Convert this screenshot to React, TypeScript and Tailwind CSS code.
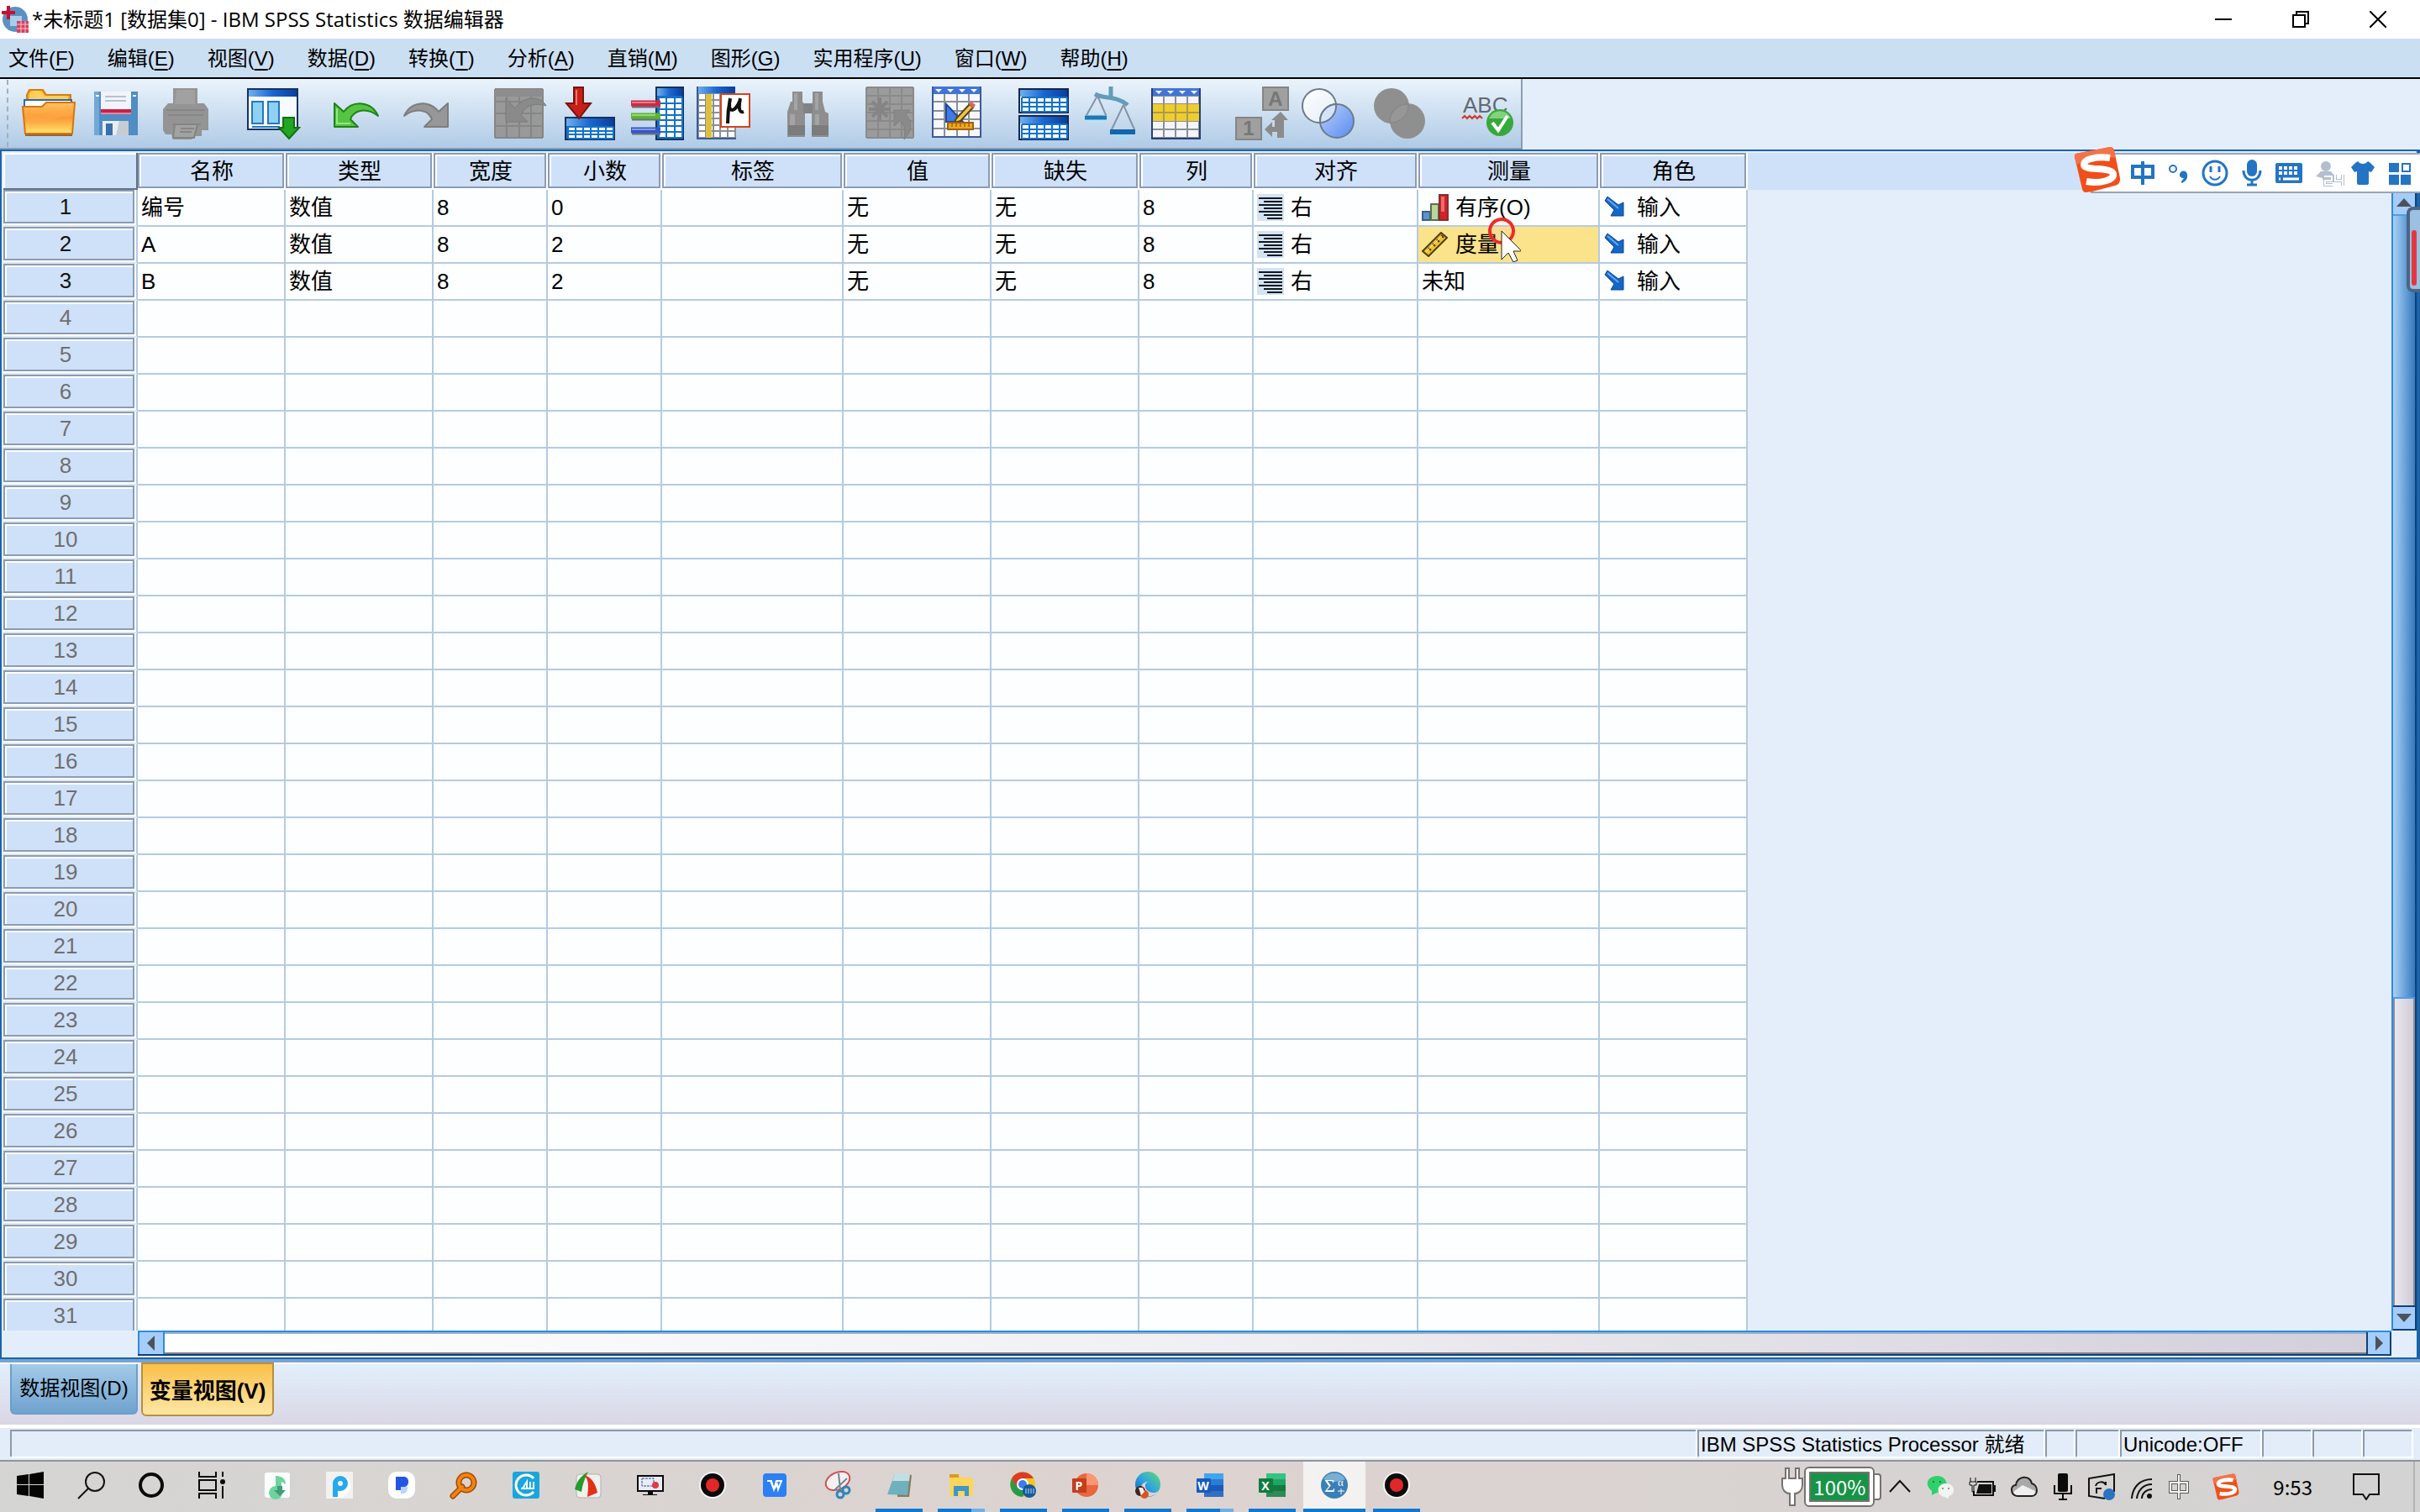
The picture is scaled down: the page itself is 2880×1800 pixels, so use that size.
import type { ReactNode } from "react";
import clsx from "clsx";

/* ---------- data ---------- */

const menus = [
  ["文件", "F"],
  ["编辑", "E"],
  ["视图", "V"],
  ["数据", "D"],
  ["转换", "T"],
  ["分析", "A"],
  ["直销", "M"],
  ["图形", "G"],
  ["实用程序", "U"],
  ["窗口", "W"],
  ["帮助", "H"],
];

const columns = [
  { name: "名称", width: "w-[176px]" },
  { name: "类型", width: "w-[176px]" },
  { name: "宽度", width: "w-[136px]" },
  { name: "小数", width: "w-[136px]" },
  { name: "标签", width: "w-[216px]" },
  { name: "值", width: "w-[176px]" },
  { name: "缺失", width: "w-[176px]" },
  { name: "列", width: "w-[136px]" },
  { name: "对齐", width: "w-[196px]" },
  { name: "测量", width: "w-[216px]" },
  { name: "角色", width: "w-[176px]" },
];

type Variable = {
  name: string;
  decimals: string;
  measure: ReactNode;
  selected?: boolean;
};

const variables: Variable[] = [
  {
    name: "编号",
    decimals: "0",
    measure: (
      <IconLabel icon={<OrdinalIcon />}>有序(O)</IconLabel>
    ),
  },
  {
    name: "A",
    decimals: "2",
    measure: <IconLabel icon={<ScaleIcon />}>度量</IconLabel>,
    selected: true,
  },
  { name: "B", decimals: "2", measure: "未知" },
];

const ROW_COUNT = 31;

/* ---------- cell icons ---------- */

function IconLabel({ icon, children }: { icon: ReactNode; children: ReactNode }) {
  return (
    <span className="flex items-center gap-2">
      {icon}
      <span>{children}</span>
    </span>
  );
}

function OrdinalIcon() {
  return (
    <svg className="h-8 w-8" viewBox="0 0 32 32" aria-hidden="true">
      <rect x="1" y="21" width="9" height="10" fill="#5b93cf" stroke="#3f5f86" strokeWidth="2" />
      <rect x="11" y="12" width="9" height="19" fill="#b9d79b" stroke="#5c7050" strokeWidth="2" />
      <rect x="21" y="1" width="10" height="30" fill="#d81f26" stroke="#7c3236" strokeWidth="2" />
      <rect x="23" y="3" width="4" height="18" fill="#f06a6a" />
    </svg>
  );
}

function ScaleIcon() {
  return (
    <svg className="h-8 w-8" viewBox="0 0 32 32" aria-hidden="true">
      <path d="M1 24 23 2l7 6L8 30z" fill="#f0c02e" stroke="#4a3d10" strokeWidth="2" strokeLinejoin="round" />
      <path d="m8 20 3 3m2-8 3 3m2-8 3 3m2-8 3 3" stroke="#4a3d10" strokeWidth="2" />
      <path d="m5 25 19-19" stroke="#fde487" strokeWidth="1" />
    </svg>
  );
}

function AlignRightIcon() {
  return (
    <svg className="h-8 w-8" viewBox="0 0 32 32" aria-hidden="true" shapeRendering="crispEdges">
      <rect width="32" height="32" fill="#d3e3f3" />
      <path d="M2 5h28M8 9h22M2 13h28M8 17h22M2 21h28M8 25h22M12 29h18" stroke="#101820" strokeWidth="2" />
    </svg>
  );
}

function InputRoleIcon() {
  return (
    <svg className="h-8 w-8" viewBox="0 0 32 32" aria-hidden="true">
      <path d="M5 3 18 13l6-3v16H9l4-7L2 8z" fill="#1467c8" stroke="#0c4590" strokeWidth="1" />
      <path d="m5 6 13 11" stroke="#63a9ee" strokeWidth="2" />
    </svg>
  );
}

/* ---------- toolbar icons (64 x 64) ---------- */

function Grid({ x, y, w, h, cols, rows, line = "#1272c9", fill = "#fff" }: {
  x: number; y: number; w: number; h: number; cols: number; rows: number; line?: string; fill?: string;
}) {
  const d: string[] = [];
  for (let c = 0; c <= cols; c++) d.push(`M${x + (w * c) / cols} ${y}v${h}`);
  for (let r = 0; r <= rows; r++) d.push(`M${x} ${y + (h * r) / rows}h${w}`);
  return (
    <g shapeRendering="crispEdges">
      <rect x={x} y={y} width={w} height={h} fill={fill} />
      <path d={d.join("")} stroke={line} strokeWidth="2" fill="none" />
    </g>
  );
}

const openIcon = (
  <>
    <path d="M6 18V10l3-6h16l4 6h29v30H6z" fill="#f6a821" stroke="#d67d12" strokeWidth="2" />
    <path d="M9 16V9l3-4h11l4 6h28v5z" fill="#ffcf5a" />
    <path d="M3 16h56v20H3z" fill="#fff" stroke="#2968b4" strokeWidth="2" />
    <path d="M1 24h23l5-5h34l-3 37H4z" fill="url(#folder)" stroke="#d9740f" strokeWidth="2" />
    <path d="M4 30c18 14 34-3 56-4l-1 8C38 36 22 50 6 42z" fill="#ffa94a" opacity=".6" />
    <path d="M4 58h56" stroke="#8c6a36" strokeWidth="2" />
  </>
);

const saveIcon = (
  <>
    <path d="M6 6h52v52H8l-2-3z" fill="#4f8dc3" />
    <path d="M6 6h6v52H6z" fill="#72a8d6" />
    <rect x="14" y="6" width="36" height="26" fill="#f1f4f8" />
    <path d="M19 12h25M19 17h25" stroke="#b8c2ce" strokeWidth="2" />
    <path d="M14 27h36v5H14z" fill="#cb1f4a" />
    <path d="M14 31h36v2H14z" fill="#e58aa0" />
    <rect x="16" y="41" width="31" height="17" fill="#e9edf1" />
    <path d="M36 41h11v17H32z" fill="#c5ccd3" />
    <rect x="20" y="44" width="8" height="14" fill="#3571ab" />
    <path d="M8 11h4M52 11h4" stroke="#f4f9ff" strokeWidth="2" />
  </>
);

const printIcon = (
  <>
    <path d="M20 2h29v18h8l5 7v25h-8v7H44l-2 4H20l-2-6h-7l-3-5V27l6-7h6z" fill="#949494" />
    <path d="M24 4h22v17H22z" fill="#a1a1a1" />
    <path d="M12 28h46M14 34h42M19 45h34" stroke="#868686" strokeWidth="2" />
    <path d="m22 45-2 16h25l4-16z" fill="#a2a2a2" stroke="#848484" strokeWidth="2" />
    <path d="M29 50h16M28 54h14" stroke="#868686" strokeWidth="2" />
  </>
);

const dialogIcon = (
  <>
    <rect x="1" y="3" width="59" height="48" fill="#f7fbff" stroke="#16325f" strokeWidth="2" />
    <rect x="2" y="4" width="57" height="8" fill="url(#bar)" />
    <rect x="6" y="18" width="13" height="26" fill="#8fd0f5" stroke="#2478bd" strokeWidth="2" />
    <rect x="25" y="18" width="13" height="26" fill="#8fd0f5" stroke="#2478bd" strokeWidth="2" />
    <path d="M6 48h33" stroke="#2478bd" strokeWidth="2" />
    <path d="M43 37h13v12h6L50 62 38 49h5z" fill="#22a520" stroke="#137011" strokeWidth="2" />
  </>
);

const undoIcon = (
  <>
    <path d="M6 20v28h28l-9-9c4-11 19-15 33-4C50 17 28 16 17 30z" fill="#54c541" stroke="#24801c" strokeWidth="2" strokeLinejoin="round" />
    <path d="M9 26v18h16" stroke="#93e87d" strokeWidth="2" fill="none" />
  </>
);

const redoIcon = (
  <path d="M61 20v28H33l9-9c-4-11-19-15-33-4C17 17 39 16 50 30z" fill="#979797" stroke="#7d7d7d" strokeWidth="2" strokeLinejoin="round" />
);

const gotoCaseIcon = (
  <>
    <Grid x={3} y={3} w={57} h={58} cols={4} rows={4} line="#868686" fill="#999" />
    <path d="M3 3h57v9H3z" fill="#8d8d8d" />
    <path d="M16 14v28h26l-8-8c4-10 15-16 30-11-6-12-27-13-37 3z" fill="#8a8a8a" stroke="#7b7b7b" strokeWidth="1" />
  </>
);

const gotoVarIcon = (
  <>
    <rect x="7" y="37" width="58" height="26" fill="#1272c9" stroke="#16325f" strokeWidth="2" />
    <rect x="8" y="38" width="56" height="9" fill="url(#bar)" />
    <Grid x={10} y={48} w={54} h={14} cols={6} rows={3} />
    <path d="M17 1h11v19h9L23 38 8 20h9z" fill="#c71f17" stroke="#781510" strokeWidth="2" />
    <path d="M20 4v18" stroke="#ef7468" strokeWidth="2" />
  </>
);

const variablesIcon = (
  <>
    <rect x="35" y="1" width="32" height="62" fill="#1272c9" stroke="#16325f" strokeWidth="2" />
    <rect x="36" y="2" width="30" height="9" fill="url(#bar)" />
    <Grid x={38} y={13} w={28} h={48} cols={3} rows={7} />
    <path d="M6 24h34M6 39h34M6 56h34" stroke="#66727e" strokeWidth="3" />
    <path d="M5 20h35" stroke="#d02a42" strokeWidth="7" />
    <path d="M5 35h35" stroke="#59b62d" strokeWidth="7" />
    <path d="M5 52h35" stroke="#3457c8" strokeWidth="7" />
    <path d="M6 19h28M6 34h28M6 51h28" stroke="#fff" strokeWidth="2" opacity=".4" />
  </>
);

const muIcon = (
  <>
    <Grid x={5} y={8} w={44} h={53} cols={5} rows={7} line="#8b8f97" />
    <rect x="4" y="0" width="45" height="8" fill="url(#bar)" />
    <path d="M14 9h7v52h-7z" fill="#dcc03c" />
    <path d="M4 0v62h46" stroke="#3a5c99" strokeWidth="2" fill="none" />
    <rect x="32" y="9" width="34" height="39" fill="#fff" stroke="#d5431b" strokeWidth="2" />
    <path d="M43 14c-2 10-3 20-3 30M43 15c-4 16 5 18 12 1m0-2c-2 10-2 18 4 16" stroke="#101010" strokeWidth="4" fill="none" />
  </>
);

const findIcon = (
  <>
    <path d="M13 6h12v12l3 4v38H7V30l4-12h2z" fill="#8e8e8e" />
    <path d="M37 6h12v12l3 12 4 2v28H36V22l1-4z" fill="#8e8e8e" />
    <path d="M26 20h11v12H26z" fill="#828282" />
    <path d="M10 33h6v25h-6zM40 33h5v25h-5zM15 8h4v20h-4zM40 8h4v20h-4z" fill="#a4a4a4" />
    <path d="M8 46h20v12H8zM36 46h20v12H36z" fill="#7c7c7c" />
  </>
);

const insertCaseIcon = (
  <>
    <Grid x={3} y={1} w={56} h={60} cols={4} rows={6} line="#8a8a8a" fill="#9b9b9b" />
    <path d="M19 13v28M10 18l18 18M28 18 10 36M6 27h26" stroke="#858585" strokeWidth="4" />
    <path d="M36 28h19l-5 5c8 8 8 20-2 30 2-12 0-18-5-22l-7 6z" fill="#8a8a8a" stroke="#808080" strokeWidth="1" />
  </>
);

const blueHeader = (y: number) => (
  <>
    <path d={`M1 ${y}h58v9H1z`} fill="#4274d8" />
    <path d={`M5 ${y + 3}h8l-4 4zM19 ${y + 3}h8l-4 4zM33 ${y + 3}h8l-4 4zM47 ${y + 3}h8l-4 4z`} fill="#fff" />
  </>
);

const insertVarIcon = (
  <>
    <Grid x={2} y={8} w={57} h={52} cols={4} rows={5} line="#8b8f97" fill="#f6f8fc" />
    {blueHeader(0)}
    <path d="M2 0v60h57V0" stroke="#3d5b94" strokeWidth="2" fill="none" />
    <path d="M18 21v21h20z" fill="#3f7be0" stroke="#1d46a0" strokeWidth="2" />
    <path d="m30 38 16-17 4 4-15 16-7 2z" fill="#f2c649" stroke="#5a431a" strokeWidth="2" />
    <path d="m45 21 3-3 5 4-3 4z" fill="#d8655b" />
    <path d="M20 43h30v8H20z" fill="#f0a51f" stroke="#9c6410" strokeWidth="2" />
    <path d="M25 44v4m5-4v4m5-4v4m5-4v4m5-4v4" stroke="#76480a" strokeWidth="1" />
  </>
);

const splitHalf = (y: number) => (
  <>
    <rect x="3" y={y + 1} width="58" height="28" fill="#fff" stroke="#17274f" strokeWidth="2" />
    <rect x="4" y={y + 2} width="56" height="8" fill="url(#bar)" />
    <Grid x={6} y={y + 11} w={54} h={17} cols={6} rows={3} />
  </>
);

const splitIcon = (
  <>
    {splitHalf(2)}
    {splitHalf(34)}
  </>
);

const weightIcon = (
  <>
    <path d="M32 0v14M13 9c10 6 27 2 39 13" stroke="#629cb8" strokeWidth="5" fill="none" />
    <path d="M16 11 2 36M16 11l11 25M47 22 33 51M47 22l13 29" stroke="#8494a4" strokeWidth="2" />
    <path d="M0 34h28c-1 13-27 14-28 0z" fill="#b9e2f5" />
    <path d="M1 37h26" stroke="#1f78b5" strokeWidth="5" />
    <path d="M30 52h32c-2 15-30 16-32 0z" fill="#aadaf3" />
    <path d="M31 54h30" stroke="#1565a8" strokeWidth="6" />
  </>
);

const selectIcon = (
  <>
    <Grid x={1} y={11} w={56} h={50} cols={4} rows={5} line="#8b8f97" fill="#f4f5fc" />
    <g shapeRendering="crispEdges">
      <path d="M2 21h55v20H2z" fill="#efcd2c" />
      <path d="M1 31h56M15 21v20M29 21v20M43 21v20" stroke="#a89a55" strokeWidth="2" />
    </g>
    {blueHeader(2)}
    <path d="M1 2v60h57V2" stroke="#2a3f72" strokeWidth="2" fill="none" />
  </>
);

const valueLabelsIcon = (
  <>
    <rect x="33" y="1" width="30" height="27" fill="#a0a0a0" stroke="#858585" strokeWidth="2" />
    <text x="48" y="23" textAnchor="middle" fontSize="24" fontWeight="700" fontFamily="Liberation Sans" fill="#777">A</text>
    <rect x="1" y="37" width="30" height="26" fill="#a0a0a0" stroke="#858585" strokeWidth="2" />
    <text x="16" y="58" textAnchor="middle" fontSize="24" fontWeight="700" fontFamily="Liberation Sans" fill="#777">1</text>
    <path d="M47 40h-4l11-10 9 10h-5v21h-8v-7h-6v6l-9-9 9-9v6h3z" fill="#8b8b8b" />
  </>
);

const setsIcon = (
  <>
    <circle cx="20" cy="23" r="20" fill="url(#pale)" stroke="#6d7a8a" strokeWidth="2" />
    <circle cx="41" cy="41" r="20" fill="url(#sphere)" stroke="#6d7a8a" strokeWidth="2" />
    <path d="M21 41a20 20 0 0 1 19-20 20 20 0 0 1-19 22z" fill="#d4e4fb" stroke="#6d7a8a" strokeWidth="2" />
  </>
);

const allSetsIcon = (
  <>
    <circle cx="26" cy="23" r="21" fill="#8f8f8f" />
    <circle cx="45" cy="41" r="21" fill="#8f8f8f" />
    <path d="M24 41a21 21 0 0 1 22-20 21 21 0 0 1-22 22z" fill="#979797" stroke="#848484" strokeWidth="1" />
  </>
);

const spellIcon = (
  <>
    <text x="3" y="31" fontSize="26" fontFamily="Liberation Sans" fill="#636972">ABC</text>
    <path d="m2 38 3-3 3 3 3-3 3 3 3-3 3 3 3-3 3 3" stroke="#d23b2a" strokeWidth="2" fill="none" />
    <circle cx="47" cy="43" r="16" fill="#37a93c" />
    <path d="M34 38a14 14 0 0 1 26 0z" fill="#83d27d" />
    <path d="m38 43 7 9 11-17" stroke="#fff" strokeWidth="4" fill="none" />
  </>
);

const toolGroups = [
  { gap: "ml-4", tools: [["打开", openIcon], ["保存", saveIcon], ["打印", printIcon]] },
  { gap: "ml-11", tools: [["重新调用对话框", dialogIcon]] },
  { gap: "ml-[34px]", tools: [["撤销", undoIcon], ["重做", redoIcon]] },
  { gap: "ml-[50px]", tools: [["转至个案", gotoCaseIcon], ["转至变量", gotoVarIcon], ["变量", variablesIcon], ["描述统计", muIcon]] },
  { gap: "ml-10", tools: [["查找", findIcon]] },
  { gap: "ml-[34px]", tools: [["插入个案", insertCaseIcon], ["插入变量", insertVarIcon]] },
  { gap: "ml-[38px]", tools: [["拆分文件", splitIcon], ["加权个案", weightIcon], ["选择个案", selectIcon]] },
  { gap: "ml-9", tools: [["值标签", valueLabelsIcon], ["使用变量集", setsIcon], ["显示所有变量", allSetsIcon]] },
  { gap: "ml-11", tools: [["拼写检查", spellIcon]] },
] as { gap: string; tools: [string, ReactNode][] }[];

/* gradients shared by the toolbar and taskbar drawings */
function Gradients() {
  return (
    <svg className="absolute h-0 w-0" aria-hidden="true">
      <defs>
        <linearGradient id="bar" x1="0" x2="1">
          <stop offset="0" stopColor="#6db0f0" />
          <stop offset=".5" stopColor="#1a66cf" />
          <stop offset="1" stopColor="#0a3f9e" />
        </linearGradient>
        <linearGradient id="folder" x1="0" x2="0" y1="0" y2="1">
          <stop offset="0" stopColor="#ffc25c" />
          <stop offset=".5" stopColor="#fb9a35" />
          <stop offset="1" stopColor="#ffe46f" />
        </linearGradient>
        <linearGradient id="sphere" x1="0" x2="1" y1="0" y2="1">
          <stop offset="0" stopColor="#b9d2fb" />
          <stop offset="1" stopColor="#5a8af0" />
        </linearGradient>
        <linearGradient id="pale" x1="0" x2="1" y1="0" y2="1">
          <stop offset="0" stopColor="#ffffff" />
          <stop offset="1" stopColor="#e3ecf8" />
        </linearGradient>
        <linearGradient id="edge" x1="0" x2="1" y1="1" y2="0">
          <stop offset="0" stopColor="#1456b8" />
          <stop offset=".5" stopColor="#2fa6df" />
          <stop offset="1" stopColor="#62dc6e" />
        </linearGradient>
      </defs>
    </svg>
  );
}

/* ---------- taskbar ---------- */

const recordDot = (
  <>
    <circle cx="16" cy="16" r="16" fill="#f4f4f4" />
    <circle cx="16" cy="16" r="14" fill="#0b0b0b" />
    <circle cx="16" cy="16" r="8" fill="#e02828" />
  </>
);

const officeIcon = (letter: string, dark: string, mid: string, light: string) => (
  <>
    <path d="M9 2h23v7H9z" fill={light} />
    <path d="M9 9h23v7H9z" fill={mid} />
    <path d="M9 16h23v7H9z" fill={dark} />
    <path d="M9 23h23v7H9z" fill={dark} opacity=".85" />
    <rect x="0" y="8" width="17" height="17" rx="1" fill={dark} />
    <text x="8" y="22" textAnchor="middle" fontSize="14" fontWeight="700" fontFamily="Open Sans" fill="#fff">{letter}</text>
  </>
);

type App = { name: string; icon: ReactNode; state?: "open" | "many" | "active" };

const systemApps: App[] = [
  {
    name: "开始",
    icon: <path d="M0 5 14 3v12H0zM15 3 32 0v15H15zM0 16h14v13L0 27zM15 16h17v16l-17-3z" fill="#050505" />,
  },
  {
    name: "搜索",
    icon: (
      <g stroke="#111" strokeWidth="2" fill="none">
        <circle cx="21" cy="12" r="11" />
        <path d="M13 20 1 32" />
      </g>
    ),
  },
  { name: "小娜", icon: <circle cx="16" cy="16" r="13" stroke="#0a0a0a" strokeWidth="4" fill="none" /> },
  {
    name: "任务视图",
    icon: (
      <g stroke="#0a0a0a" strokeWidth="2" fill="none">
        <path d="M1 0v6h20V0M1 32v-6h20v6M1 10h20v12H1zM29 0v6M29 17v15" />
        <circle cx="29" cy="12" r="2" fill="#0a0a0a" />
      </g>
    ),
  },
];

const apps: App[] = [
  {
    name: "音乐下载",
    icon: (
      <>
        <rect x="1" y="1" width="30" height="30" rx="3" fill="#fafdfb" />
        <path d="M14 5c5 0 12 2 12 10l-5-3v9a8 8 0 1 1-7-4z" fill="#6fd3a0" />
        <path d="M16 17h6v5h4l-7 7-7-7h4z" fill="#3f9d78" />
      </>
    ),
  },
  {
    name: "PP助手",
    icon: (
      <>
        <path d="M0 0h32v32H0z" fill="#f3f2f1" />
        <path d="M26 8c6 8 2 20-10 23l-4-4z" fill="#fff" />
        <path d="M8 30V14a9 9 0 1 1 9 9h-3v7z" fill="#26a9ee" />
        <circle cx="17" cy="14" r="3" fill="#f3f2f1" />
      </>
    ),
  },
  {
    name: "PDF阅读器",
    icon: (
      <>
        <rect width="32" height="32" rx="10" fill="#fff" />
        <path d="M9 6h11c6 2 5 11 0 12h-3v4H9z" fill="#2456e6" />
        <path d="M15 18h8c1 6-4 9-8 8z" fill="#b9d5fb" />
      </>
    ),
  },
  {
    name: "查找工具",
    icon: (
      <>
        <path d="m14 18-11 11" stroke="#9a4a06" strokeWidth="7" strokeLinecap="round" />
        <circle cx="19" cy="13" r="9" stroke="#9a4a06" strokeWidth="7" fill="none" />
        <path d="m14 18-11 11" stroke="#f5820f" strokeWidth="4" strokeLinecap="round" />
        <circle cx="19" cy="13" r="9" stroke="#f5820f" strokeWidth="4" fill="none" />
      </>
    ),
  },
  {
    name: "知网",
    icon: (
      <>
        <rect width="32" height="32" rx="3" fill="#1aa6dd" />
        <path d="M25 8a12 12 0 1 0 0 16" stroke="#fff" strokeWidth="3" fill="none" />
        <path d="m12 20 5-8v8m4-8v8m4-8v8M10 20h16" stroke="#fff" strokeWidth="2" fill="none" />
      </>
    ),
  },
  {
    name: "截图工具",
    icon: (
      <>
        <rect x="2" y="3" width="29" height="28" rx="4" fill="#f0f0ef" stroke="#b4afab" strokeWidth="1" />
        <path d="M16 0C7 5 2 12 0 21l8 3c1-9 4-16 8-24z" fill="#239a2b" />
        <path d="M10 4c8 5 6 15 5 26l12-5C25 14 19 5 10 4z" fill="#e23018" />
      </>
    ),
  },
  {
    name: "录屏",
    icon: (
      <>
        <rect x="1" y="5" width="30" height="18" fill="#e9ecf2" stroke="#0a0a0a" strokeWidth="2" />
        <path d="M6 8h14v9H6z" stroke="#2b4fa8" strokeWidth="1" strokeDasharray="3 1" fill="none" />
        <circle cx="22" cy="16" r="4" fill="#e33b46" />
        <path d="M13 24h6v3h5v1H7v-1h6z" fill="#0a0a0a" />
      </>
    ),
  },
  { name: "录制", icon: recordDot },
  {
    name: "WPS",
    icon: (
      <>
        <rect x="2" y="2" width="28" height="28" rx="4" fill="#2c80f5" />
        <path d="M7 11h5l3 10 3-10h7M11 11l4 10 4-6 1 6 4-10" stroke="#fff" strokeWidth="2" fill="none" />
      </>
    ),
  },
  {
    name: "剪切",
    icon: (
      <>
        <ellipse cx="17" cy="11" rx="15" ry="10" fill="#f6f1f0" stroke="#d0505a" strokeWidth="2" transform="rotate(-25 17 11)" />
        <path d="m18 2 2 20M28 8 13 22" stroke="#6f8594" strokeWidth="2" />
        <circle cx="20" cy="27" r="4" stroke="#3186b8" strokeWidth="3" fill="none" />
        <circle cx="27" cy="22" r="4" stroke="#3186b8" strokeWidth="3" fill="none" />
      </>
    ),
  },
  {
    name: "记事本",
    state: "open",
    icon: (
      <>
        <path d="m14 2 17 2-3 26H14z" fill="#8c7a57" />
        <path d="M11 2h18l-3 26L2 27z" fill="#6fb1bf" />
        <path d="M11 2h18l-1 9H8z" fill="#c4dfe4" />
      </>
    ),
  },
  {
    name: "文件资源管理器",
    state: "many",
    icon: (
      <>
        <path d="M2 3h11l3 4h14v22H2z" fill="#fbd55c" />
        <path d="M2 3h11v4H2z" fill="#d89c1d" />
        <path d="M7 17h18v12h-5v-6h-8v6H7z" fill="#3f96c8" />
      </>
    ),
  },
  {
    name: "Chrome",
    state: "open",
    icon: (
      <>
        <circle cx="15" cy="15" r="15" fill="#f6c623" />
        <path d="M2 8a15 15 0 0 1 26 0H15v7L8 19z" fill="#dc3b2c" />
        <path d="M2 8a15 15 0 0 0 13 22l6-11-13-1z" fill="#269a4c" />
        <circle cx="15" cy="15" r="7" fill="#fff" />
        <circle cx="15" cy="15" r="5" fill="#3f7de8" />
        <circle cx="23" cy="23" r="8" fill="#155a9c" />
        <path d="M19 20v6m3-6v6m3-6v6m3-6v6" stroke="#b9d8f2" strokeWidth="1" />
      </>
    ),
  },
  {
    name: "PowerPoint",
    state: "open",
    icon: (
      <>
        <circle cx="17" cy="16" r="14" fill="#e8673f" />
        <path d="M17 2a14 14 0 0 1 14 14H17z" fill="#fb9673" />
        <rect x="0" y="8" width="17" height="17" rx="1" fill="#c43e1c" />
        <text x="8" y="22" textAnchor="middle" fontSize="14" fontWeight="700" fontFamily="Open Sans" fill="#fff">P</text>
      </>
    ),
  },
  {
    name: "Edge",
    state: "open",
    icon: (
      <>
        <circle cx="16" cy="15" r="15" fill="url(#edge)" />
        <path d="M20 12c-8-2-10 8-2 12 4 2 8 1 11-1-6 8-16 8-20 3C5 20 9 10 20 12z" fill="#ddd3d0" />
        <circle cx="7" cy="23" r="6" fill="#3a2622" />
        <circle cx="12" cy="27" r="5" fill="#d8541f" />
        <path d="M5 19h5l2 5-4 4z" fill="#f1ece6" />
      </>
    ),
  },
  { name: "Word", state: "many", icon: officeIcon("W", "#185abd", "#2b7cd3", "#41a5ee") },
  { name: "Excel", state: "open", icon: officeIcon("X", "#107c41", "#21a366", "#33c481") },
  {
    name: "SPSS",
    state: "active",
    icon: (
      <>
        <circle cx="16" cy="16" r="16" fill="#3a7fb5" />
        <path d="M3 9a15 15 0 0 1 26 0 30 30 0 0 1-26 0z" fill="#79afd3" />
        <text x="4" y="24" fontSize="22" fontFamily="Liberation Serif" fill="#fff">Σ</text>
        <text x="20" y="17" fontSize="13" fontFamily="Liberation Serif" fill="#fff">α</text>
        <path d="M24 20v7m-4-4h8" stroke="#fff" strokeWidth="1" />
      </>
    ),
  },
  { name: "录屏大师", state: "open", icon: recordDot },
];

function TaskButton({ app, narrow }: { app: App; narrow?: boolean }) {
  return (
    <button
      type="button"
      aria-label={app.name}
      className={clsx(
        "flex h-full flex-col items-center justify-end",
        narrow ? "w-[72px]" : "w-[74px]",
        app.state === "active" && "bg-[#f4f2f1]",
      )}
    >
      <svg className="mb-3 h-8 w-8 overflow-visible" viewBox="0 0 32 32" aria-hidden="true">
        {app.icon}
      </svg>
      <span
        className={clsx("flex h-1 justify-end", {
          "w-14 bg-[#0f78d0]": app.state === "open" || app.state === "many",
          "w-full bg-[#0f78d0]": app.state === "active",
        })}
      >
        {app.state === "many" && <span className="h-1 w-4 bg-[#6fb0e4]" />}
      </span>
    </button>
  );
}

function SogouLogo({ className }: { className?: string }) {
  return (
    <svg className={className} viewBox="0 0 56 56" aria-hidden="true">
      <path d="M2 9 43 1q4 0 5 4l7 33q1 7-6 9L22 54l-8 1q-3 0-4-4L1 13q0-3 1-4z" fill="#f04f1a" />
      <path d="M2 9 43 1q4 0 5 4l2 9C30 12 16 18 3 22L1 13q0-3 1-4z" fill="#f4724a" />
      <path d="M43 14c-15-2-31 1-31 8 0 8 33 2 35 11 1 7-14 12-32 9" stroke="#fff" strokeWidth="8" fill="none" />
    </svg>
  );
}

const trayIcons: { name: string; width: string; box: string; icon: ReactNode }[] = [
  {
    name: "显示隐藏的图标",
    width: "w-7",
    box: "0 0 28 32",
    icon: <path d="m2 22 12-13 12 13" stroke="#111" strokeWidth="2" fill="none" />,
  },
  {
    name: "微信",
    width: "w-8",
    box: "0 0 32 32",
    icon: (
      <>
        <path d="M12 3c15 0 16 19 0 20l-6 3v-5C-3 14 0 4 12 3z" fill="#2fd06b" />
        <circle cx="8" cy="10" r="1" fill="#0c6d33" />
        <circle cx="16" cy="10" r="1" fill="#0c6d33" />
        <path d="M22 12c13 0 13 14 4 15v3l-5-2c-10-2-10-15 1-16z" fill="#f2f4f2" />
        <circle cx="19" cy="18" r="1" fill="#777" />
        <circle cx="26" cy="18" r="1" fill="#777" />
      </>
    ),
  },
  {
    name: "电池",
    width: "w-8",
    box: "0 0 32 32",
    icon: (
      <>
        <path d="M10 10h19v16H6v-5M31 14v8" stroke="#111" strokeWidth="2" fill="none" />
        <path d="M12 13h15v11H9z" fill="#111" />
        <path d="M2 5v5m6-5v5M1 10h8v4H6v8H4v-8H1z" stroke="#111" strokeWidth="1" fill="none" />
      </>
    ),
  },
  {
    name: "OneDrive",
    width: "w-8",
    box: "0 0 32 32",
    icon: (
      <>
        <path d="M8 27C-1 26-1 14 6 14c1-11 17-13 19-2 8 2 8 15 0 15z" fill="#a9a9a9" stroke="#222" strokeWidth="2" />
        <path d="M3 22 14 14l15 7c0 4-2 5-5 5H9c-3 0-5-1-6-4z" fill="#efefef" />
      </>
    ),
  },
  {
    name: "麦克风",
    width: "w-6",
    box: "0 0 24 32",
    icon: (
      <>
        <rect x="6" y="0" width="12" height="22" rx="2" fill="#0a0a0a" />
        <path d="M2 14v10h20V14M12 24v6M7 31h10" stroke="#0a0a0a" strokeWidth="2" fill="none" />
      </>
    ),
  },
  {
    name: "同步",
    width: "w-8",
    box: "0 0 32 32",
    icon: (
      <>
        <path d="M20 30 1 27V6l30-5v21" stroke="#111" strokeWidth="2" fill="none" />
        <path d="M9 15c2-6 10-6 12-1v-4M10 24v-6h6" stroke="#111" strokeWidth="2" fill="none" />
        <circle cx="25" cy="25" r="7" fill="#2a73bf" />
      </>
    ),
  },
  {
    name: "网络",
    width: "w-7",
    box: "0 0 28 32",
    icon: (
      <>
        <path d="M2 30C3 16 12 7 26 7M8 30c1-10 8-17 18-17M14 30c0-6 5-11 12-11" stroke="#111" strokeWidth="2" fill="none" />
        <circle cx="23" cy="27" r="3" fill="#111" />
      </>
    ),
  },
  {
    name: "中文输入",
    width: "w-6",
    box: "0 0 24 32",
    icon: (
      <>
        <path d="M2 11h20v11H2zM12 1v30" stroke="#5c5c5c" strokeWidth="4" fill="none" />
        <path d="M2 11h20v11H2zM12 2v28" stroke="#f4f4f4" strokeWidth="2" fill="none" />
      </>
    ),
  },
];

/* ---------- floating input method bar ---------- */

const imeIcons: { name: string; width: string; box: string; icon: ReactNode }[] = [
  {
    name: "中文",
    width: "w-7",
    box: "0 0 28 32",
    icon: <path d="M2 8h24v13H2zM14 2v28" stroke="#2474c4" strokeWidth="4" fill="none" />,
  },
  {
    name: "标点",
    width: "w-6",
    box: "0 0 24 32",
    icon: (
      <>
        <circle cx="6" cy="11" r="4" stroke="#2474c4" strokeWidth="2" fill="none" />
        <path d="M14 18a4 4 0 0 1 9 0c1 5-3 9-7 10v-2l3-4c-3 0-5-1-5-4z" fill="#2474c4" />
      </>
    ),
  },
  {
    name: "表情",
    width: "w-8",
    box: "0 0 32 32",
    icon: (
      <>
        <circle cx="16" cy="16" r="14" stroke="#2474c4" strokeWidth="3" fill="none" />
        <path d="M11 8v7m10-7v7" stroke="#2474c4" strokeWidth="3" />
        <path d="M10 20c3 5 9 5 12 0" stroke="#2474c4" strokeWidth="2" fill="none" />
      </>
    ),
  },
  {
    name: "语音",
    width: "w-6",
    box: "0 0 24 32",
    icon: (
      <>
        <rect x="6" y="0" width="12" height="20" rx="6" fill="#2474c4" />
        <path d="M2 13c0 15 20 15 20 0M12 24v6M6 30h12" stroke="#2474c4" strokeWidth="3" fill="none" />
      </>
    ),
  },
  {
    name: "软键盘",
    width: "w-8",
    box: "0 0 32 32",
    icon: (
      <>
        <rect x="0" y="4" width="32" height="24" rx="2" fill="#2474c4" />
        <path d="M4 10h24M4 16h24" stroke="#fff" strokeWidth="4" strokeDasharray="4 2" />
        <path d="M4 23h2m3 0h19" stroke="#fff" strokeWidth="3" />
      </>
    ),
  },
  {
    name: "用户",
    width: "w-[34px]",
    box: "0 0 34 32",
    icon: (
      <>
        <circle cx="12" cy="8" r="6" fill="#b3bfd0" />
        <path d="M0 20 6 14h12l5 6-1 4H8v-2z" fill="#b3bfd0" />
        <path d="M10 20h9v5h-8v5h9M23 18v7h9m0-7v13" stroke="#b3bfd0" strokeWidth="4" fill="none" />
        <path d="M10 20h9v5h-8v5h9M23 18v7h9m0-7v13" stroke="#fff" strokeWidth="2" fill="none" />
      </>
    ),
  },
  {
    name: "皮肤",
    width: "w-7 -ml-2",
    box: "0 0 28 32",
    icon: <path d="M5 4 8 2c3 4 9 4 12 0l3 2 5 5-4 6-3-1v14q0 2-2 2H9q-2 0-2-2V14l-3 1-4-6z" fill="#2474c4" />,
  },
  {
    name: "工具箱",
    width: "w-7",
    box: "0 0 28 32",
    icon: (
      <>
        <path d="M1 4h12v11H1zM1 18h12v12H1zM15 18h12v12H15z" fill="#2474c4" />
        <path d="M17 5h9v9h-9z" stroke="#2474c4" strokeWidth="2" fill="none" />
      </>
    ),
  },
];

function ImeBar() {
  return (
    <div className="absolute top-[174px] right-0 z-10 flex items-end">
      <SogouLogo className="z-10 -mr-9 h-14 w-14" />
      <div className="flex h-12 w-[392px] items-center gap-4 border-y-2 border-[#98a5b8] bg-white pl-12">
        {imeIcons.map((item) => (
          <button key={item.name} type="button" aria-label={item.name}>
            <svg className={clsx("h-8", item.width)} viewBox={item.box} aria-hidden="true">
              {item.icon}
            </svg>
          </button>
        ))}
      </div>
    </div>
  );
}

/* ---------- window parts ---------- */

function TitleBar() {
  return (
    <header className="flex h-[46px] shrink-0 items-center bg-white pl-[2px]">
      <svg className="h-8 w-8" viewBox="0 0 32 32" aria-hidden="true">
        <circle cx="16" cy="16" r="15" fill="#5b91c2" />
        <path d="M10 12h14v12H10z" fill="#a9cdea" />
        <path d="M8 0v16M0 8h16" stroke="#c8102e" strokeWidth="4" />
        <path d="M18 18h14v14H18z" fill="#d8405f" />
        <path d="M18 22h14M18 27h14M23 18v14M28 18v14" stroke="#f6c7d0" strokeWidth="1" />
      </svg>
      <h1 className="ml-1 flex-1 font-['Open_Sans','Noto_Sans_CJK_SC',sans-serif] text-[24px] leading-8 text-black">
        *未标题1 [数据集0] - IBM SPSS Statistics 数据编辑器
      </h1>
      <div className="flex h-full pr-1">
        <button type="button" aria-label="最小化" className="flex w-[92px] items-center justify-center">
          <svg className="h-5 w-5" viewBox="0 0 20 20"><path d="M0 10h20" stroke="#000" strokeWidth="2" /></svg>
        </button>
        <button type="button" aria-label="还原" className="flex w-[92px] items-center justify-center">
          <svg className="h-5 w-5" viewBox="0 0 20 20">
            <path d="M1 5h14v14H1zM5 5V1h14v14h-4" stroke="#000" strokeWidth="2" fill="none" />
          </svg>
        </button>
        <button type="button" aria-label="关闭" className="flex w-[92px] items-center justify-center">
          <svg className="h-5 w-5" viewBox="0 0 20 20"><path d="m0 0 20 20M20 0 0 20" stroke="#000" strokeWidth="2" /></svg>
        </button>
      </div>
    </header>
  );
}

function MenuBar() {
  return (
    <nav className="flex h-12 shrink-0 items-center gap-[39px] border-b-2 border-black bg-[#cbdff3] pt-[2px] pl-[10px] text-[24px] leading-8">
      {menus.map(([label, key]) => (
        <button key={key} type="button" className="whitespace-nowrap">
          {label}(<u className="underline-offset-4">{key}</u>)
        </button>
      ))}
    </nav>
  );
}

function Toolbar() {
  return (
    <div className="flex h-[84px] shrink-0 bg-[#e4eefa]">
      <div className="flex items-center border-r-2 border-b-2 border-[#8b9cb2] bg-linear-to-b from-[#ebf4fc] to-[#b0cbe6] pr-2 pl-2">
        <span className="h-20 border-l-2 border-dashed border-[#a3aebb]" />
        {toolGroups.map((group, i) => (
          <div key={i} className={clsx("flex gap-4", group.gap)}>
            {group.tools.map(([name, icon]) => (
              <button key={name} type="button" aria-label={name}>
                <svg className="h-16 w-16 overflow-visible" viewBox="0 0 64 64" fill="none" aria-hidden="true">
                  {icon}
                </svg>
              </button>
            ))}
          </div>
        ))}
      </div>
    </div>
  );
}

function VariableTable() {
  return (
    <table className="w-full table-fixed border-separate border-spacing-0 text-[26px] leading-8">
      <thead>
        <tr className="h-11">
          <th className="w-[160px] border-r-2 border-b-2 border-[#607389] bg-[#cfe1f9] p-0">
            <span className="block h-[42px] border-t-2 border-l-2 border-white" />
          </th>
          {columns.map((col) => (
            <th key={col.name} className={clsx("bg-white p-0 pr-[2px] pb-[2px] font-normal", col.width)}>
              <span className="flex h-[42px] items-center justify-center border-2 border-[#8b9cb2] bg-[#cfe1f9] pt-[2px] pl-[2px] shadow-[inset_2px_2px_0_#fff]">
                {col.name}
              </span>
            </th>
          ))}
          <th className="bg-[#cfe1f9] p-0" />
        </tr>
      </thead>
      <tbody>
        {Array.from({ length: ROW_COUNT }, (_, i) => {
          const v = variables[i];
          const cells: ReactNode[] = v
            ? [
                v.name,
                "数值",
                "8",
                v.decimals,
                "",
                "无",
                "无",
                "8",
                <IconLabel key="align" icon={<AlignRightIcon />}>右</IconLabel>,
                v.measure,
                <IconLabel key="role" icon={<InputRoleIcon />}>输入</IconLabel>,
              ]
            : columns.map(() => "");
          return (
            <tr key={i} className="h-11">
              <th className="border-r-2 border-b-2 border-r-[#b4cbe2] border-b-[#dce8f5] bg-white p-0 pr-[2px] pb-[2px] font-normal">
                <span
                  className={clsx(
                    "flex h-10 items-center justify-center border-2 border-[#8b9cb2] bg-[#cfe1f9] pr-2 shadow-[inset_2px_2px_0_#fff]",
                    v ? "text-[#141414]" : "text-[#6f6f6f]",
                  )}
                >
                  {i + 1}
                </span>
              </th>
              {cells.map((cell, c) => (
                <td
                  key={c}
                  className={clsx(
                    "border-r-2 border-b-2 border-[#b4cbe2] p-0 pl-1 whitespace-nowrap",
                    c === 9 && v?.selected ? "bg-[#fbe38b]" : "bg-[#fdfeff]",
                  )}
                >
                  {cell}
                </td>
              ))}
            </tr>
          );
        })}
      </tbody>
    </table>
  );
}

function Arrow({ d }: { d: string }) {
  return (
    <svg className="h-5 w-5" viewBox="0 0 20 20" aria-hidden="true">
      <path d={d} fill="#4d5258" />
    </svg>
  );
}

function VerticalScrollbar() {
  return (
    <div className="flex w-[30px] shrink-0 flex-col border-r-2 border-l-2 border-r-[#123f78] border-l-[#2d8be0]">
      <button type="button" aria-label="向上滚动" className="flex h-[75px] items-end justify-center border-b-2 border-[#4a9eee] bg-[#a5cdfa] pb-1">
        <Arrow d="M10 5 19 15H1z" />
      </button>
      <div className="flex-[933] border-b-2 border-[#4a9eee] bg-linear-to-r from-[#a9d2f4] to-[#3279bf]" />
      <div className="flex-[366] border-x-2 border-[#8a8f98] bg-linear-to-r from-[#e9e7ec] to-[#cfccd8]" />
      <button type="button" aria-label="向下滚动" className="flex h-[30px] items-center justify-center border-y-2 border-[#123f78] bg-[#a5cdfa]">
        <Arrow d="M1 5h18l-9 10z" />
      </button>
    </div>
  );
}

function HorizontalScrollbar() {
  return (
    <div className="flex h-8 shrink-0 pb-[2px]">
      <div className="w-[160px] shrink-0" />
      <div className="flex flex-1 border-t-2 border-b-2 border-t-[#2d8be0] border-b-[#123f78]">
        <button type="button" aria-label="向左滚动" className="flex w-8 items-center justify-center border-x-2 border-[#2d8be0] bg-[#a5cdfa]">
          <Arrow d="M14 1v18L5 10z" />
        </button>
        <div className="flex-1 border-y-2 border-t-[#9bb3cc] border-b-[#7b7f86] bg-linear-to-r from-white via-[#efeef2] to-[#d3cfdb]" />
        <button type="button" aria-label="向右滚动" className="flex w-[30px] items-center justify-center border-x-2 border-[#123f78] bg-[#a5cdfa]">
          <Arrow d="M6 1v18l9-9z" />
        </button>
      </div>
    </div>
  );
}

function ViewTabs() {
  return (
    <div className="flex h-[74px] shrink-0 items-start gap-1 border-t-2 border-white bg-linear-to-b from-[#e2effc] to-[#dad6e5] pl-3 leading-8">
      <button type="button" className="h-[60px] w-[152px] rounded-b-md border-x-2 border-b-2 border-[#6b9fcb] bg-linear-to-b from-[#a3cbe8] to-[#70a2cf] text-[24px] whitespace-nowrap">
        数据视图(D)
      </button>
      <button type="button" className="-mt-[2px] h-[64px] w-[158px] rounded-b-md border-2 border-[#b98f3b] bg-linear-to-b from-[#fbc045] to-[#fde6a2] pt-1 text-[26px] font-bold whitespace-nowrap">
        变量视图(V)
      </button>
    </div>
  );
}

function StatusCell({ width, children }: { width: string; children?: ReactNode }) {
  return (
    <div className={clsx("border-t-2 border-l-2 border-[#8e99a8] pl-[2px] whitespace-nowrap shadow-[2px_2px_0_#fff]", width)}>
      {children}
    </div>
  );
}

function StatusBar() {
  return (
    <footer className="flex h-11 shrink-0 gap-[2px] border-t-4 border-b-2 border-t-white border-b-[#8f959c] bg-[#e3edf9] pt-[2px] pr-[10px] pb-1 pl-3 text-[24px] leading-8">
      <StatusCell width="flex-1" />
      <StatusCell width="w-[412px]">IBM SPSS Statistics Processor 就绪</StatusCell>
      <StatusCell width="w-[34px]" />
      <StatusCell width="w-[51px]" />
      <StatusCell width="w-[167px]">Unicode:OFF</StatusCell>
      <StatusCell width="w-[58px]" />
      <StatusCell width="w-[58px]" />
      <StatusCell width="w-[58px]" />
    </footer>
  );
}

function Taskbar() {
  return (
    <div className="flex h-[60px] shrink-0 bg-linear-to-r from-[#d5d5d3] via-[#ddd3d0] to-[#d3d3d3] font-['Noto_Sans_CJK_SC',sans-serif]">
      {systemApps.map((app) => (
        <TaskButton key={app.name} app={app} narrow />
      ))}
      <div className="ml-[5px] flex">
        {apps.map((app) => (
          <TaskButton key={app.name} app={app} />
        ))}
      </div>
      <div className="ml-auto flex items-center gap-2 border-r-2 border-[#b5b2b2] pr-10">
        <div className="flex items-center">
          <svg className="h-12 w-7" viewBox="0 0 28 48" aria-hidden="true">
            <path d="M6 2v12H2v8c0 6 4 10 9 10v14h6V32c5 0 9-4 9-10v-8h-4V2h-4v12h-8V2z" fill="#fff" stroke="#77726f" strokeWidth="2" />
          </svg>
          <span className="flex h-12 items-center rounded-md border-2 border-[#77726f] bg-white p-1">
            <span className="flex h-full w-[72px] items-center justify-center border-2 border-[#77726f] bg-[#179447] text-[24px] text-white">
              100%
            </span>
          </span>
          <span className="h-8 w-2 rounded-r border-2 border-l-0 border-[#77726f] bg-white" />
        </div>
        <div className="flex items-center gap-[18px]">
          {trayIcons.map((item) => (
            <button key={item.name} type="button" aria-label={item.name}>
              <svg className={clsx("h-8", item.width)} viewBox={item.box} aria-hidden="true">
                {item.icon}
              </svg>
            </button>
          ))}
        </div>
        <button type="button" aria-label="搜狗输入法" className="ml-5">
          <SogouLogo className="h-8 w-8" />
        </button>
        <time className="mx-8 text-[24px] text-black">9:53</time>
        <button type="button" aria-label="通知" className="ml-2">
          <svg className="h-8 w-8" viewBox="0 0 32 32" aria-hidden="true">
            <path d="M1 1h30v24H20l-4 6-4-6H1z" stroke="#111" strokeWidth="2" fill="none" />
          </svg>
        </button>
      </div>
      <span className="w-[6px]" />
    </div>
  );
}

/* click ring and mouse pointer over the measure column */
function Pointer() {
  return (
    <svg className="pointer-events-none absolute top-[256px] left-[1770px] z-10 h-14 w-10" viewBox="0 0 40 56" aria-hidden="true">
      <circle cx="17" cy="19" r="14" stroke="#ee2a26" strokeWidth="4" fill="#f8c9a0" fillOpacity=".2" />
      <path d="M17 19v34l8-8 6 11 5-2-5-11h10z" fill="#fff" stroke="#222" strokeWidth="1" />
    </svg>
  );
}

export default function App() {
  return (
    <div className="relative flex h-screen flex-col overflow-hidden bg-[#e3eefa] font-['Liberation_Sans','Noto_Sans_CJK_SC',sans-serif] text-black">
      <Gradients />
      <TitleBar />
      <MenuBar />
      <Toolbar />
      <main className="flex min-h-0 flex-1 border-t-2 border-r-4 border-b-2 border-l-2 border-[#1b64a9] bg-[#e3eefa] pt-[2px] pl-[2px]">
        <div className="flex min-w-0 flex-1 flex-col">
          <div className="min-h-0 flex-1 overflow-hidden">
            <VariableTable />
          </div>
          <HorizontalScrollbar />
        </div>
        <div className="flex flex-col pb-8">
          <div className="flex min-h-0 flex-1">
            <VerticalScrollbar />
          </div>
        </div>
      </main>
      <div className="h-1 shrink-0 bg-[#78a4d0]" />
      <ViewTabs />
      <StatusBar />
      <Taskbar />
      <ImeBar />
      <Pointer />
      {/* recorder level meter docked to the screen edge */}
      <div className="absolute top-[246px] right-0 z-10 flex h-[102px] w-4 items-end rounded-l-lg border-4 border-r-0 border-[#4c6583] bg-[#9bc0e2] pl-[2px]">
        <div className="mb-1 h-[66px] w-[6px] rounded-full bg-[#e5363f]" />
      </div>
    </div>
  );
}
